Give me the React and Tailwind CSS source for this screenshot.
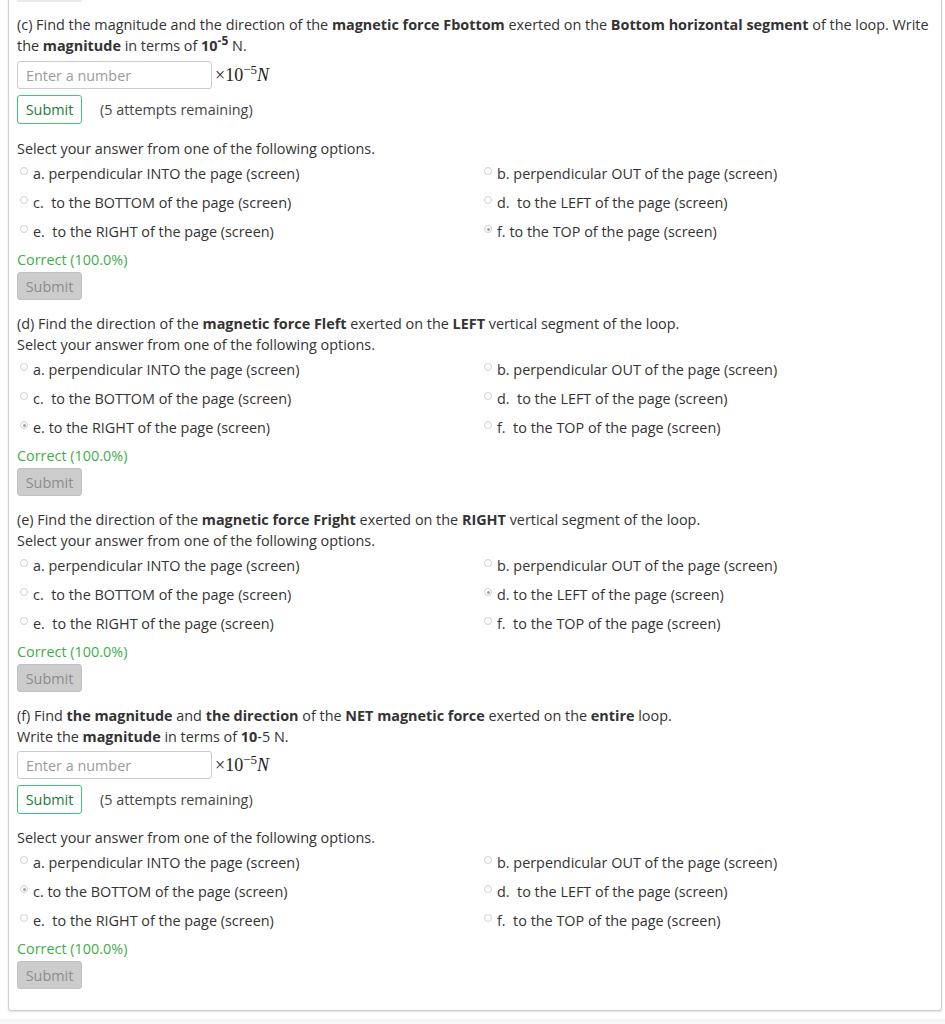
const opts = [
  ["a", "perpendicular INTO the page (screen)"],
  ["b", "perpendicular OUT of the page (screen)"],
  ["c", "to the BOTTOM of the page (screen)"],
  ["d", "to the LEFT of the page (screen)"],
  ["e", "to the RIGHT of the page (screen)"],
  ["f", "to the TOP of the page (screen)"],
];

const Radio = ({ checked }) => (
  <span className="-mt-[5px] ml-[3px] mr-[5px] flex h-[8px] w-[8px] shrink-0 items-center justify-center rounded-full border border-[#d0d0d0] bg-white">
    {checked && <span className="h-[3px] w-[3px] rounded-full bg-[#a0a0a0]" />}
  </span>
);

const Options = ({ selected }) => (
  <div className="grid grid-cols-[464px_1fr]">
    {opts.map(([k, label]) => {
      const on = k === selected;
      // the chosen answer shows a single space after its letter
      const first = k === "a" || k === "b";
      return (
        <div key={k} className="flex h-[29px] items-center">
          <Radio checked={on} />
          <span className="whitespace-pre">
            {k}.{first || on ? " " : "  "}
            {label}
          </span>
        </div>
      );
    })}
  </div>
);

const Graded = ({ selected }) => (
  <>
    <Options selected={selected} />
    <div className="mt-[3px] text-[#3fae49]">Correct (100.0%)</div>
    <button className="mt-[2px] flex h-[28px] w-[65px] items-center justify-center rounded-[3px] border border-[#c2c2c2] bg-[#cccccc] text-[#8c8c8c]">
      Submit
    </button>
  </>
);

const NumberEntry = ({ top }) => (
  <>
    <div className={`flex items-center ${top}`}>
      <div className="flex h-[28px] w-[195px] items-center rounded-[3px] border border-[#cccccc] px-[8px] text-[#9b9b9b]">
        Enter a number
      </div>
      <span className="ml-[3px] font-['Liberation_Serif',serif] text-[18px] text-[#222]">
        ×10<sup className="text-[13px] leading-none">−5</sup>
        <i>N</i>
      </span>
    </div>
    <div className="mt-[6px] flex items-center">
      <button className="flex h-[29px] w-[65px] items-center justify-center rounded-[3px] border-[1.5px] border-[#46c378] text-[#1e7b3c]">
        Submit
      </button>
      <span className="ml-[18px] text-[#444]">(5 attempts remaining)</span>
    </div>
  </>
);

export default function App() {
  return (
    <div className="bg-white font-['Open_Sans',sans-serif] text-[14.4px] leading-[21px] text-[#333]">
      <div className="ml-[8px] w-[934px] rounded-b-[3px] border-x border-b border-[#cfcfcf] pb-[21px] pl-[8px] pr-[8px] shadow-[0_1px_2px_rgba(0,0,0,0.12)]">
        <div className="h-[2px] w-[65px] rounded-b-[3px] bg-[#e9e9e9]" />

        {/* (c) */}
        <p className="mt-[12px]">
          (c) Find the magnitude and the direction of the <b>magnetic force Fbottom</b> exerted on the{" "}
          <b>Bottom horizontal segment</b> of the loop. Write the <b>magnitude</b> in terms of{" "}
          <b>
            10<sup className="text-[12px] leading-none">-5</sup>
          </b>{" "}
          N.
        </p>
        <NumberEntry top="mt-[5px]" />
        <p className="mt-[14px]">Select your answer from one of the following options.</p>
        <Graded selected="f" />

        {/* (d) */}
        <p className="mt-[13px]">
          (d) Find the direction of the <b>magnetic force Fleft</b> exerted on the <b>LEFT</b> vertical segment of the loop.
          <br />
          Select your answer from one of the following options.
        </p>
        <Graded selected="e" />

        {/* (e) */}
        <p className="mt-[13px]">
          (e) Find the direction of the <b>magnetic force Fright</b> exerted on the <b>RIGHT</b> vertical segment of the loop.
          <br />
          Select your answer from one of the following options.
        </p>
        <Graded selected="d" />

        {/* (f) */}
        <p className="mt-[13px]">
          (f) Find <b>the magnitude</b> and <b>the direction</b> of the <b>NET magnetic force</b> exerted on the{" "}
          <b>entire</b> loop.
          <br />
          Write the <b>magnitude</b> in terms of <b>10</b>-5 N.
        </p>
        <NumberEntry top="mt-[4px]" />
        <p className="mt-[13px]">Select your answer from one of the following options.</p>
        <Graded selected="c" />
      </div>
      <div className="mt-[8px] h-[14px] bg-[#f7f7f7]" />
    </div>
  );
}
